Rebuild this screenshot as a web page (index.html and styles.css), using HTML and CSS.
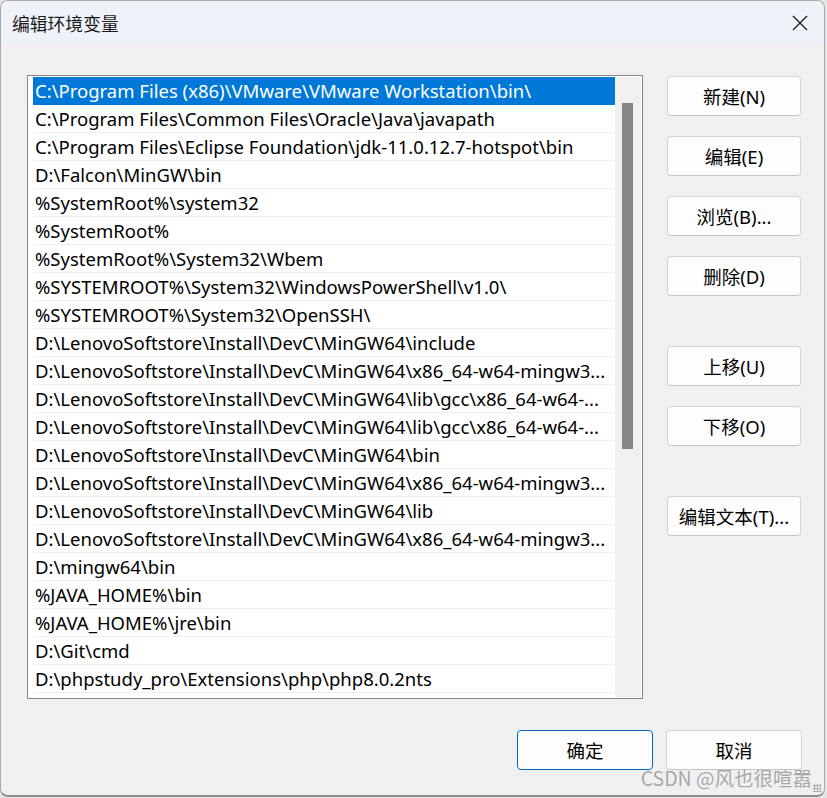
FILE: index.html
```html
<!DOCTYPE html>
<html lang="zh-CN">
<head>
<meta charset="utf-8">
<title>编辑环境变量</title>
<link rel="stylesheet" href="styles.css">
</head>
<body>
<div class="window">
  <div class="titlebar">
    <span class="title">编辑环境变量</span>
    <svg class="close" width="16" height="16" viewBox="0 0 16 16"><path d="M1 1 L15 15 M15 1 L1 15" stroke="#1a1a1a" stroke-width="1.3" fill="none"/></svg>
  </div>
  <div class="main">
    <div class="listbox">
      <div class="rows">
        <div class="row selected">C:\Program Files (x86)\VMware\VMware Workstation\bin\</div>
        <div class="row">C:\Program Files\Common Files\Oracle\Java\javapath</div>
        <div class="row">C:\Program Files\Eclipse Foundation\jdk-11.0.12.7-hotspot\bin</div>
        <div class="row">D:\Falcon\MinGW\bin</div>
        <div class="row">%SystemRoot%\system32</div>
        <div class="row">%SystemRoot%</div>
        <div class="row">%SystemRoot%\System32\Wbem</div>
        <div class="row">%SYSTEMROOT%\System32\WindowsPowerShell\v1.0\</div>
        <div class="row">%SYSTEMROOT%\System32\OpenSSH\</div>
        <div class="row">D:\LenovoSoftstore\Install\DevC\MinGW64\include</div>
        <div class="row">D:\LenovoSoftstore\Install\DevC\MinGW64\x86_64-w64-mingw3...</div>
        <div class="row">D:\LenovoSoftstore\Install\DevC\MinGW64\lib\gcc\x86_64-w64-...</div>
        <div class="row">D:\LenovoSoftstore\Install\DevC\MinGW64\lib\gcc\x86_64-w64-...</div>
        <div class="row">D:\LenovoSoftstore\Install\DevC\MinGW64\bin</div>
        <div class="row">D:\LenovoSoftstore\Install\DevC\MinGW64\x86_64-w64-mingw3...</div>
        <div class="row">D:\LenovoSoftstore\Install\DevC\MinGW64\lib</div>
        <div class="row">D:\LenovoSoftstore\Install\DevC\MinGW64\x86_64-w64-mingw3...</div>
        <div class="row">D:\mingw64\bin</div>
        <div class="row">%JAVA_HOME%\bin</div>
        <div class="row">%JAVA_HOME%\jre\bin</div>
        <div class="row">D:\Git\cmd</div>
        <div class="row">D:\phpstudy_pro\Extensions\php\php8.0.2nts</div>
      </div>
      <div class="scrollbar"><div class="thumb"></div></div>
    </div>
    <div class="side">
      <button class="btn">新建(N)</button>
      <button class="btn">编辑(E)</button>
      <button class="btn">浏览(B)...</button>
      <button class="btn">删除(D)</button>
      <button class="btn gap">上移(U)</button>
      <button class="btn">下移(O)</button>
      <button class="btn gap">编辑文本(T)...</button>
    </div>
  </div>
  <div class="footer">
    <button class="btn wide primary">确定</button>
    <button class="btn wide">取消</button>
  </div>
  <div class="watermark">CSDN @风也很喧嚣</div>
  <div class="grip"></div>
</div>
</body>
</html>
```

FILE: styles.css
```css
html, body {
  margin: 0;
  padding: 0;
}
body {
  width: 827px;
  height: 798px;
  background: #e4e4e4;
  font-family: "Noto Sans", "Noto Sans CJK SC", sans-serif;
  color: #000;
  overflow: hidden;
}
.window {
  position: relative;
  box-sizing: border-box;
  width: 825px;
  height: 797px;
  background: #f0f0f0;
  border: 1px solid #a9a9a9;
  border-bottom: 2px solid #8f8f8f;
  border-radius: 8px;
  overflow: hidden;
  display: flex;
  flex-direction: column;
}
.titlebar {
  height: 43px;
  flex: none;
  background: #eff3f9;
  display: flex;
  align-items: center;
  justify-content: space-between;
  padding: 0 16px 0 11px;
}
.title {
  font-size: 17.8px;
  color: #1a1a1a;
  font-family: "Noto Sans CJK SC", sans-serif;
}
.close {
  display: block;
  margin-top: 1px;
}
.main {
  display: flex;
  padding: 31px 21px 0 26px;
  gap: 24px;
}
.listbox {
  box-sizing: border-box;
  width: 616px;
  height: 624px;
  border: 1px solid #82868c;
  background: #fff;
  display: flex;
  padding: 1px 1px 1px 5px;
}
.rows {
  width: 582px;
  overflow: hidden;
}
.row {
  box-sizing: border-box;
  height: 28px;
  line-height: 27px;
  padding-left: 2px;
  font-size: 18.5px;
  white-space: nowrap;
  overflow: hidden;
  border-bottom: 1px solid #efefef;
}
.row.selected {
  background: #0078d7;
  color: #fff;
  border-bottom-color: #0078d7;
}
.scrollbar {
  flex: 1;
  background: #f0f0f0;
  margin-top: 0;
  padding: 26px 7px 0 7px;
}
.thumb {
  width: 11px;
  height: 346px;
  background: #868686;
}
.side {
  display: flex;
  flex-direction: column;
  gap: 20px;
  padding-top: 1px;
}
.btn {
  box-sizing: border-box;
  width: 134px;
  height: 40px;
  background: #fdfdfd;
  border: 1px solid #d3d3d3;
  border-bottom-color: #c4c4c4;
  border-radius: 4px;
  font-family: "Noto Sans", "Noto Sans CJK SC", sans-serif;
  font-size: 18.5px;
  color: #000;
  padding: 0;
}
.btn.gap {
  margin-top: 30px;
}
.footer {
  display: flex;
  justify-content: flex-end;
  gap: 13px;
  padding: 31px 22px 0 0;
}
.btn.wide {
  width: 136px;
}
.btn.primary {
  border: 1px solid #0067c0;
}
.watermark {
  position: absolute;
  right: 12px;
  bottom: 3px;
  font-size: 19.5px;
  color: #a6a6a6;
  font-family: "Noto Sans CJK SC", sans-serif;
  text-shadow: 0 0 1px #fff;
}
.grip {
  position: absolute;
  right: 3px;
  bottom: 3px;
  width: 8px;
  height: 8px;
  background: radial-gradient(circle, #b0b0b0 1px, transparent 1.2px) 0 0 / 3px 3px;
}
```
